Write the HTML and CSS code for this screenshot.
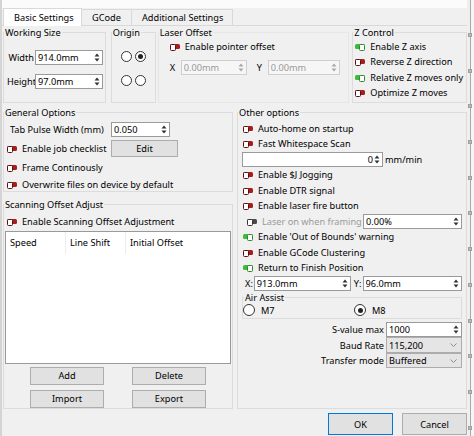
FILE: index.html
```html
<!DOCTYPE html>
<html>
<head>
<meta charset="utf-8">
<title>Settings</title>
<link rel="stylesheet" href="styles.css">
</head>
<body>
<div class="screen">
  <div class="main">
    <div class="topstrip"></div>
    <div class="tabbar">
      <div class="tab active t-basic">Basic Settings</div>
      <div class="tab t-gcode">GCode</div>
      <div class="tab t-add">Additional Settings</div>
    </div>
    <div class="panel">
      <div class="toprow">
        <fieldset class="grp g-work">
          <legend>Working Size</legend>
          <div class="work-form">
            <span class="lbl-r">Width</span>
            <div class="spin"><span class="val">914.0mm</span><svg class="arr" width="6" height="9" viewBox="0 0 6 9"><path d="M3 0.5L5.5 3.5H0.5Z M3 8.5L5.5 5.5H0.5Z"/></svg></div>
            <span class="lbl-r">Height</span>
            <div class="spin"><span class="val">97.0mm</span><svg class="arr" width="6" height="9" viewBox="0 0 6 9"><path d="M3 0.5L5.5 3.5H0.5Z M3 8.5L5.5 5.5H0.5Z"/></svg></div>
          </div>
        </fieldset>
        <fieldset class="grp g-origin">
          <legend>Origin</legend>
          <div class="origin-grid">
            <span class="radio"></span><span class="radio checked"></span>
            <span class="radio"></span><span class="radio"></span>
          </div>
        </fieldset>
        <fieldset class="grp g-laser">
          <legend>Laser Offset</legend>
          <div class="laser-in">
            <div class="row"><span class="tg off"></span><span>Enable pointer offset</span></div>
            <div class="xy-row">
              <span class="axis">X</span>
              <div class="spin dis sx"><span class="val">0.00mm</span><svg class="arr" width="6" height="9" viewBox="0 0 6 9"><path d="M3 0.5L5.5 3.5H0.5Z M3 8.5L5.5 5.5H0.5Z"/></svg></div>
              <span class="axis ay">Y</span>
              <div class="spin dis sy"><span class="val">0.00mm</span><svg class="arr" width="6" height="9" viewBox="0 0 6 9"><path d="M3 0.5L5.5 3.5H0.5Z M3 8.5L5.5 5.5H0.5Z"/></svg></div>
            </div>
          </div>
        </fieldset>
        <fieldset class="grp g-z">
          <legend>Z Control</legend>
          <div class="z-in">
            <div class="row zr"><span class="tg on"></span><span>Enable Z axis</span></div>
            <div class="row zr"><span class="tg off"></span><span>Reverse Z direction</span></div>
            <div class="row zr"><span class="tg on"></span><span>Relative Z moves only</span></div>
            <div class="row zr"><span class="tg off"></span><span>Optimize Z moves</span></div>
          </div>
        </fieldset>
      </div>

      <div class="midrow">
        <div class="leftcol">
          <fieldset class="grp g-general">
            <legend>General Options</legend>
            <div class="gen-in">
              <div class="pulse-row"><span class="pulse-lbl">Tab Pulse Width (mm)</span><div class="spin s-pulse"><span class="val">0.050</span><svg class="arr" width="6" height="9" viewBox="0 0 6 9"><path d="M3 0.5L5.5 3.5H0.5Z M3 8.5L5.5 5.5H0.5Z"/></svg></div></div>
              <div class="row edit-row"><span class="tg off"></span><span class="edit-lbl">Enable job checklist</span><button class="btn b-edit">Edit</button></div>
              <div class="row gr"><span class="tg off"></span><span>Frame Continously</span></div>
              <div class="row gr"><span class="tg off"></span><span>Overwrite files on device by default</span></div>
            </div>
          </fieldset>
          <fieldset class="grp g-scan">
            <legend>Scanning Offset Adjust</legend>
            <div class="scan-in">
              <div class="row"><span class="tg off"></span><span>Enable Scanning Offset Adjustment</span></div>
              <div class="table">
                <div class="thead">
                  <span class="th">Speed</span>
                  <span class="th">Line Shift</span>
                  <span class="th last">Initial Offset</span>
                </div>
              </div>
              <div class="btn-grid">
                <button class="btn">Add</button>
                <button class="btn">Delete</button>
                <button class="btn">Import</button>
                <button class="btn">Export</button>
              </div>
            </div>
          </fieldset>
        </div>

        <fieldset class="grp g-other">
          <legend>Other options</legend>
          <div class="other-in">
            <div class="row"><span class="tg off"></span><span>Auto-home on startup</span></div>
            <div class="row"><span class="tg off"></span><span>Fast Whitespace Scan</span></div>
            <div class="row speed-row"><div class="spin s-speed"><span class="val right">0</span><svg class="arr" width="6" height="9" viewBox="0 0 6 9"><path d="M3 0.5L5.5 3.5H0.5Z M3 8.5L5.5 5.5H0.5Z"/></svg></div><span class="unit">mm/min</span></div>
            <div class="row"><span class="tg off"></span><span>Enable $J Jogging</span></div>
            <div class="row"><span class="tg off"></span><span>Enable DTR signal</span></div>
            <div class="row"><span class="tg off"></span><span>Enable laser fire button</span></div>
            <div class="row frame-row"><span class="tg dis"></span><span class="disabled">Laser on when framing</span><div class="spin s-frame"><span class="val">0.00%</span><svg class="arr" width="6" height="9" viewBox="0 0 6 9"><path d="M3 0.5L5.5 3.5H0.5Z M3 8.5L5.5 5.5H0.5Z"/></svg></div></div>
            <div class="row"><span class="tg on"></span><span>Enable 'Out of Bounds' warning</span></div>
            <div class="row"><span class="tg off"></span><span>Enable GCode Clustering</span></div>
            <div class="row"><span class="tg on"></span><span>Return to Finish Position</span></div>
            <div class="row finish-row">
              <span class="axl">X:</span>
              <div class="spin s-fx"><span class="val">913.0mm</span><svg class="arr" width="6" height="9" viewBox="0 0 6 9"><path d="M3 0.5L5.5 3.5H0.5Z M3 8.5L5.5 5.5H0.5Z"/></svg></div>
              <span class="axl ayl">Y:</span>
              <div class="spin s-fy"><span class="val">96.0mm</span><svg class="arr" width="6" height="9" viewBox="0 0 6 9"><path d="M3 0.5L5.5 3.5H0.5Z M3 8.5L5.5 5.5H0.5Z"/></svg></div>
            </div>
            <fieldset class="grp g-air">
              <legend>Air Assist</legend>
              <div class="air-in">
                <div class="air-opt"><span class="radio big"></span><span>M7</span></div>
                <div class="air-opt"><span class="radio big checked"></span><span>M8</span></div>
              </div>
            </fieldset>
            <div class="opt-form">
              <span class="lbl-r">S-value max</span>
              <div class="spin s-form"><span class="val">1000</span><svg class="arr" width="6" height="9" viewBox="0 0 6 9"><path d="M3 0.5L5.5 3.5H0.5Z M3 8.5L5.5 5.5H0.5Z"/></svg></div>
              <span class="lbl-r">Baud Rate</span>
              <div class="combo"><span class="val">115,200</span><svg class="chev" width="7" height="4" viewBox="0 0 7 4"><path d="M0.5 0.5L3.5 3.5L6.5 0.5"/></svg></div>
              <span class="lbl-r">Transfer mode</span>
              <div class="combo"><span class="val">Buffered</span><svg class="chev" width="7" height="4" viewBox="0 0 7 4"><path d="M0.5 0.5L3.5 3.5L6.5 0.5"/></svg></div>
            </div>
          </div>
        </fieldset>
      </div>
    </div>
    <div class="footer">
      <button class="btn b-ok">OK</button>
      <button class="btn b-cancel">Cancel</button>
    </div>
  </div>
  <div class="edge">
    <span class="mark"></span><span class="mark"></span><span class="mark"></span><span class="mark"></span>
    <span class="mark"></span><span class="mark"></span><span class="mark"></span><span class="mark"></span>
    <span class="mark"></span><span class="mark"></span><span class="mark"></span><span class="mark"></span>
  </div>
</div>
</body>
</html>
```

FILE: styles.css
```css
* { box-sizing: border-box; }
html, body { margin: 0; padding: 0; }
body {
  width: 474px;
  height: 436px;
  overflow: hidden;
  background: #f0f0f0;
  font-family: "Noto Sans", "DejaVu Sans", sans-serif;
  font-size: 9.2px;
  line-height: 11px;
  color: #000;
}
.screen { display: flex; height: 436px; }
.main {
  width: 467px;
  display: flex;
  flex-direction: column;
  border-left: 2px solid #d4d4d4;
}
.topstrip { height: 8px; background: #fbfbfb; }
.tabbar {
  height: 18px;
  display: flex;
  align-items: flex-end;
  padding-left: 1px;
  border-bottom: 1px solid #d9d9d9;
  background: #f0f0f0;
}
.tab {
  height: 16px;
  border: 1px solid #d9d9d9;
  border-bottom: none;
  background: #f0f0f0;
  padding-left: 10px;
  display: flex;
  align-items: center;
}
.tab.active {
  height: 18px;
  background: #ffffff;
  margin-bottom: -1px;
  position: relative;
  z-index: 1;
}
.t-basic { width: 79px; }
.t-gcode { width: 51px; margin-left: -1px; }
.t-add { width: 102px; margin-left: -1px; }

.panel {
  height: 383px;
  padding-left: 1px;
  display: flex;
  flex-direction: column;
}

/* group boxes */
.grp {
  margin: 0;
  padding: 0;
  min-width: 0;
  border: 1px solid #dcdcdc;
}
.grp > legend {
  padding: 0 1px;
  margin-left: 0;
  line-height: 11px;
}

.toprow {
  display: flex;
  height: 76px;
  margin-top: 0.5px;
}
.g-work { width: 103px; }
.g-origin { width: 45px; margin-left: 5px; }
.g-laser { width: 192px; margin-left: 2px; border-color: #e6e6e6; }
.g-z { width: 115px; margin-left: 3px; }

.work-form {
  display: grid;
  grid-template-columns: 27px 68px;
  grid-template-rows: 15px 15px;
  row-gap: 9px;
  column-gap: 1px;
  padding: 12px 0 0 3px;
  align-items: center;
}
.lbl-r { text-align: right; white-space: nowrap; }

.spin {
  height: 15px;
  background: #fff;
  border: 1px solid #9a9a9a;
  display: flex;
  align-items: center;
  padding: 0 2px 0 2px;
}
.spin .val { flex: 1; white-space: nowrap; overflow: hidden; }
.spin .val.right { text-align: right; padding-right: 1px; }
.arr { flex: none; fill: #333; }
.spin.dis { background: #f6f6f6; border-color: #cfcfcf; color: #9a9a9a; }
.spin.dis .arr { fill: #a8a8a8; }

.origin-grid {
  display: grid;
  grid-template-columns: 11px 11px;
  grid-template-rows: 11px 11px;
  column-gap: 3px;
  row-gap: 13px;
  justify-content: center;
  padding-top: 13.5px;
}
.radio {
  display: block;
  width: 11px;
  height: 11px;
  border: 1px solid #333;
  border-radius: 50%;
  background: #fff;
  position: relative;
}
.radio.checked::after {
  content: "";
  position: absolute;
  left: 2px; top: 2px;
  width: 5px; height: 5px;
  border-radius: 50%;
  background: #222;
}
.radio.big { width: 12px; height: 12px; }
.radio.big.checked::after { left: 2.5px; top: 2.5px; }

.row {
  display: flex;
  align-items: center;
  height: 15.5px;
  white-space: nowrap;
}
.tg {
  display: inline-block;
  width: 10px;
  height: 5px;
  border-radius: 1.5px;
  position: relative;
  flex: none;
  margin-right: 5px;
}
.tg::before {
  content: "";
  position: absolute;
  top: 0;
  width: 4px;
  height: 5px;
  border: 1px solid #5a1010;
  background: #fff;
  border-radius: 1.5px;
}
.tg.off { background: #a81e1e; }
.tg.off::before { left: 0; }
.tg.on { background: #3dbb3d; }
.tg.on::before { right: 0; border-color: #2b8a2b; }
.tg.dis { background: #4a4a4a; }
.tg.dis::before { left: 0; border-color: #333; }

.laser-in { padding: 1.5px 0 0 11px; }
.xy-row { display: flex; align-items: center; height: 15px; margin-top: 5.5px; }
.axis { width: 6px; margin-right: 5px; }
.ay { margin-left: 10px; }
.sx { width: 66px; }
.sy { width: 72px; }

.z-in { padding: 1.5px 0 0 2px; }
.zr { height: 15.3px; }

.midrow {
  display: flex;
  margin-top: 4.5px;
  height: 302px;
}
.leftcol {
  width: 230px;
  display: flex;
  flex-direction: column;
}
.g-general { height: 85px; }
.gen-in { padding: 0 0 0 3px; }
.pulse-row { display: flex; align-items: center; height: 15px; margin: 4px 0 0 3px; }
.pulse-lbl { width: 101px; white-space: nowrap; }
.s-pulse { width: 59px; }
.edit-row { height: 18px; margin-top: 2.5px; }
.edit-lbl { width: 89px; }
.gr { height: 15px; margin-top: 2px; }

.btn {
  font: inherit;
  color: #000;
  background: #e1e1e1;
  border: 1px solid #adadad;
  padding: 0;
  margin: 0;
  display: flex;
  align-items: center;
  justify-content: center;
}
.b-edit { width: 67px; height: 17px; }

.g-scan { height: 210px; margin-top: 7px; }
.scan-in { padding: 3.5px 0 0 3px; }
.table {
  width: 226px;
  height: 133px;
  margin: 1.5px 0 0 -2px;
  background: #fff;
  border: 1px solid #9a9a9a;
}
.thead { display: flex; height: 22px; }
.th {
  width: 60px;
  padding-left: 4px;
  display: flex;
  align-items: center;
  border-right: 1px solid #ececec;
}
.th.last { border-right: none; width: auto; }
.btn-grid {
  display: grid;
  grid-template-columns: 74px 74px;
  grid-template-rows: 18px 18px;
  column-gap: 28px;
  row-gap: 5px;
  margin: 3px 0 0 23px;
}

.g-other { width: 230px; height: 302px; margin-left: 4px; }
.other-in { padding: 2.25px 4px 0 5px; }
.speed-row { margin-left: -1px; }
.s-speed { width: 141px; }
.unit { margin-left: 2px; }
.frame-row { padding-left: 4px; }
.disabled { color: #9a9a9a; }
.s-frame { width: 99px; margin-left: auto; }
.finish-row { margin-left: 2px; }
.axl { flex: none; margin-right: 1px; }
.ayl { margin-left: 3px; }
.s-fx { width: 97px; }
.s-fy { flex: 1; }

.g-air { margin: 1px 0 0 -1px; height: 27px; }
.g-air > legend { margin-left: 1px; }
.air-in { display: grid; grid-template-columns: 111px 1fr; height: 15px; align-items: center; }
.air-opt { display: flex; align-items: center; gap: 6px; }

.opt-form {
  display: grid;
  grid-template-columns: 1fr 76px;
  grid-template-rows: 15px 15.5px 15.5px;
  column-gap: 2px;
  margin-top: 3.5px;
  align-items: center;
}
.s-form { height: 15px; }
.combo {
  height: 15.5px;
  background: #e5e5e5;
  border: 1px solid #adadad;
  display: flex;
  align-items: center;
  padding: 0 4px 0 2px;
}
.combo .val { flex: 1; }
.chev { fill: none; stroke: #8a8a8a; stroke-width: 1; }

.footer {
  height: 27px;
  display: flex;
  justify-content: flex-end;
  gap: 9px;
  padding-top: 4px;
}
.b-ok, .b-cancel { width: 65px; height: 22px; }
.b-ok { border-color: #0078d7; }

.edge {
  width: 7px;
  display: flex;
  flex-direction: column;
  gap: 31.7px;
  padding-top: 33px;
  background: linear-gradient(to right, #efefef 0 3px, #a9a9a9 3px 4px, #f6f6f6 4px);
}
.mark {
  display: block;
  width: 4px;
  height: 4px;
  margin-left: 1px;
  background: #b8b8b8;
  border: 1px solid #a0a0a0;
  flex: none;
}
```
